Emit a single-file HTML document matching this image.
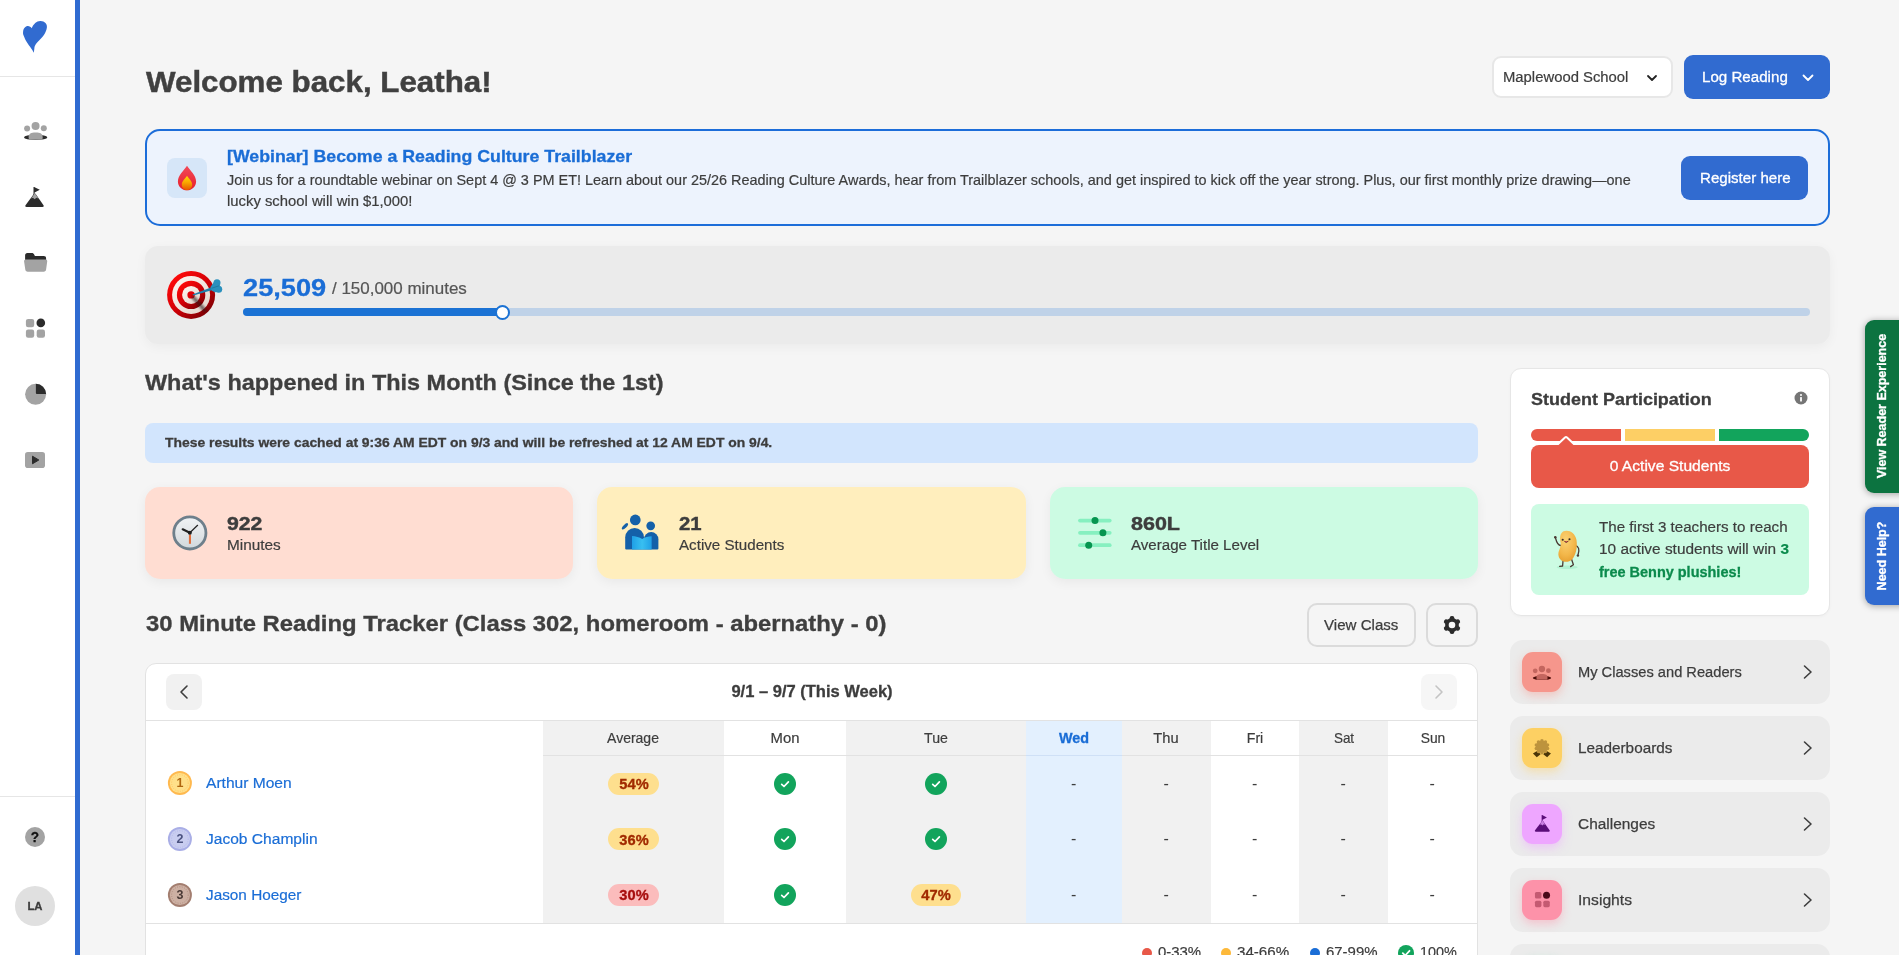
<!DOCTYPE html>
<html lang="en">
<head>
<meta charset="utf-8">
<title>Dashboard</title>
<style>
*{box-sizing:border-box;margin:0;padding:0}
html,body{width:1899px;height:955px;overflow:hidden;background:#f5f5f5;font-family:"Liberation Sans",sans-serif;color:#3d3d3d}
#root{position:absolute;left:0;top:0;width:1899px;height:955px;overflow:hidden;will-change:transform}
.abs{position:absolute}
.t{position:absolute;white-space:nowrap;line-height:1;-webkit-text-stroke:0.2px}
.t[style*="font-weight:700"]{-webkit-text-stroke:0.3px}
#side{position:absolute;left:0;top:0;width:75px;height:955px;background:#fff}
#bar{position:absolute;left:75px;top:0;width:5px;height:955px;background:#2f6bd1}
.hl{position:absolute;left:0;width:75px;height:1px;background:#e6e6e6}
h1.t{font-size:31px;font-weight:700;color:#404040;-webkit-text-stroke:0.45px}
h2.t{font-size:23px;font-weight:700;color:#3f3f3f;-webkit-text-stroke:0.32px}
.btnb{position:absolute;background:#316bd0;border-radius:8px;color:#fff}
</style>
</head>
<body>
<div id="root">
<!-- SIDEBAR -->
<div id="side"></div>
<div id="bar"></div>
<div class="hl" style="top:76px"></div>
<div class="hl" style="top:796px"></div>

<!-- HEADER -->
<h1 class="t" id="title" style="left:145.70px;top:66.71px;font-size:29.4px;letter-spacing:0px;transform-origin:0 50%;transform:scaleX(1.0650)">Welcome back, Leatha!</h1>

<!-- select + log reading -->
<div class="abs" style="left:1492px;top:56px;width:181px;height:42px;background:#fff;border:2px solid #e7e7e7;border-radius:9px"></div>
<div class="t" id="sel" style="left:1503.10px;top:69.55px;font-size:14px;color:#3d3d3d;letter-spacing:0px;transform-origin:0 50%;transform:scaleX(1.0600)">Maplewood School</div>
<svg class="abs" style="left:1645px;top:72px" width="14" height="12" viewBox="0 0 14 12"><path d="M3 4 L7 8 L11 4" fill="none" stroke="#222" stroke-width="1.8" stroke-linecap="round" stroke-linejoin="round"/></svg>
<div class="btnb" style="left:1684px;top:55px;width:146px;height:44px;border-radius:9px"></div>
<div class="t" id="logr" style="left:1702.10px;top:69.28px;font-size:15.5px;color:#fff;-webkit-text-stroke:0.3px #fff;letter-spacing:0px;transform-origin:0 50%;transform:scaleX(0.9759)">Log Reading</div>
<svg class="abs" style="left:1800px;top:71px" width="16" height="14" viewBox="0 0 16 14"><path d="M3.5 4.5 L8 9 L12.5 4.5" fill="none" stroke="#fff" stroke-width="1.8" stroke-linecap="round" stroke-linejoin="round"/></svg>

<!-- BANNER -->
<div class="abs" style="left:145px;top:129px;width:1685px;height:97px;background:#edf3fd;border:2px solid #1c6dd9;border-radius:15px"></div>
<div class="abs" style="left:167px;top:158px;width:40px;height:40px;background:#d6e6f8;border-radius:8px"></div>
<svg class="abs" style="left:177px;top:165px" width="20" height="26" viewBox="0 0 20 26">
<defs><linearGradient id="fg1" x1="0" y1="0" x2="0" y2="1"><stop offset="0" stop-color="#f24a58"/><stop offset="1" stop-color="#e81f2c"/></linearGradient>
<linearGradient id="fg2" x1="0" y1="0" x2="0" y2="1"><stop offset="0" stop-color="#ffdc00"/><stop offset="0.450" stop-color="#f9a800"/><stop offset="1" stop-color="#e65500"/></linearGradient></defs>
<path d="M10 0.800 C13 5.500 19.100 10.500 19.100 16.400 C19.100 21.500 15 25.200 10 25.200 C5 25.200 0.900 21.500 0.900 16.400 C0.900 10.500 7 5.500 10 0.800 Z" fill="url(#fg1)"/>
<path d="M10 10.800 C11.500 13.500 15.200 16 15.200 19.600 C15.200 23 12.800 25.200 10 25.200 C7.200 25.200 4.800 23 4.800 19.600 C4.800 16 8.500 13.500 10 10.800 Z" fill="url(#fg2)"/>
</svg>
<div class="t" id="bt" style="left:226.80px;top:148.41px;font-size:17px;font-weight:700;color:#1a6dd6;letter-spacing:0px;transform-origin:0 50%;transform:scaleX(1.0442)">[Webinar] Become a Reading Culture Trailblazer</div>
<div class="t" id="bl1" style="left:226.80px;top:173.03px;font-size:14.5px;color:#3d3d3d;letter-spacing:0px;transform-origin:0 50%;transform:scaleX(0.9954)">Join us for a roundtable webinar on Sept 4 @ 3 PM ET! Learn about our 25/26 Reading Culture Awards, hear from Trailblazer schools, and get inspired to kick off the year strong. Plus, our first monthly prize drawing—one</div>
<div class="t" id="bl2" style="left:226.80px;top:194.03px;font-size:14.5px;color:#3d3d3d;letter-spacing:0px;transform-origin:0 50%;transform:scaleX(1.0229)">lucky school will win $1,000!</div>
<div class="btnb" style="left:1681px;top:156px;width:127px;height:44px;border-radius:9px"></div>
<div class="t" id="reg" style="left:1699.50px;top:170.08px;font-size:15.5px;color:#fff;-webkit-text-stroke:0.3px #fff;letter-spacing:0px;transform-origin:0 50%;transform:scaleX(0.9737)">Register here</div>

<!-- GOAL -->
<div class="abs" style="left:145px;top:246px;width:1685px;height:98px;background:#ebebeb;border-radius:13px;box-shadow:0 3px 12px rgba(0,0,0,.045)"></div>
<svg class="abs" style="left:165px;top:268px" width="60" height="54" viewBox="0 0 60 54">
<defs><linearGradient id="tg" x1="0.150" y1="0.100" x2="0.850" y2="0.900"><stop offset="0" stop-color="#ff0a0a"/><stop offset="0.500" stop-color="#d40006"/><stop offset="1" stop-color="#7e0004"/></linearGradient>
<linearGradient id="tw" x1="0.150" y1="0.100" x2="0.850" y2="0.900"><stop offset="0" stop-color="#fbf3ee"/><stop offset="1" stop-color="#e6d8cf"/></linearGradient>
<filter id="bl" x="-50%" y="-50%" width="200%" height="200%"><feGaussianBlur stdDeviation="0.900"/></filter></defs>
<circle cx="26.100" cy="26.900" r="24" fill="url(#tg)"/>
<circle cx="26.100" cy="26.900" r="19" fill="url(#tw)"/>
<circle cx="26.100" cy="26.900" r="14.200" fill="url(#tg)"/>
<circle cx="26.100" cy="26.900" r="9" fill="url(#tw)"/>
<circle cx="26.100" cy="26.900" r="3.700" fill="#e00008"/>
<path d="M28.500 29.500 L39.500 42" stroke="#2a1212" stroke-opacity="0.600" stroke-width="3.800" stroke-linecap="round" filter="url(#bl)"/>
<path d="M27.500 26.600 L46.500 19.300 L47.600 22 L28.300 27.400 Z" fill="#1f80ab"/>
<circle cx="52" cy="14.800" r="3.500" fill="#2b90bd"/><circle cx="53.700" cy="21.200" r="3.500" fill="#2b90bd"/>
<path d="M45.500 19 L50 12.500 L54.500 17.500 L56 23.500 L50 24.300 L46.800 22.800 Z" fill="#2b90bd"/>
<path d="M46.500 20.300 L54.500 17.600" stroke="#1f7ba3" stroke-width="1"/>
</svg>
<div class="t" id="g1" style="left:242.70px;top:275.71px;font-size:24.8px;font-weight:700;color:#1a6dd6;letter-spacing:0px;transform-origin:0 50%;transform:scaleX(1.0970)">25,509</div>
<div class="t" id="g2" style="left:332.20px;top:280.71px;font-size:15.7px;color:#555;letter-spacing:0px;transform-origin:0 50%;transform:scaleX(1.0808)">/ 150,000 minutes</div>
<div class="abs" style="left:243px;top:308px;width:1567px;height:8px;border-radius:4px;background:#bfd2e8"></div>
<div class="abs" style="left:243px;top:308px;width:262px;height:8px;border-radius:4px;background:#1b72d4"></div>
<div class="abs" style="left:494.600px;top:304.500px;width:15px;height:15px;border-radius:50%;background:#fff;border:2.900px solid #1b72d4"></div>

<!-- WHAT'S HAPPENED -->
<h2 class="t" id="h2a" style="left:145.30px;top:372.28px;font-size:22px;letter-spacing:0px;transform-origin:0 50%;transform:scaleX(1.0653)">What's happened in This Month (Since the 1st)</h2>
<div class="abs" style="left:145px;top:423px;width:1333px;height:40px;background:#d2e5fd;border-radius:8px"></div>
<div class="t" id="cache" style="left:164.70px;top:436.78px;font-size:12.9px;font-weight:700;color:#3d3d3d;letter-spacing:0px;transform-origin:0 50%;transform:scaleX(1.0775)">These results were cached at 9:36 AM EDT on 9/3 and will be refreshed at 12 AM EDT on 9/4.</div>

<!-- STAT CARDS -->
<div class="abs card" style="left:145px;top:487px;width:428px;height:92px;background:#ffddd2;border-radius:15px;box-shadow:0 3px 12px rgba(0,0,0,.055)"></div>
<div class="abs card" style="left:597px;top:487px;width:429px;height:92px;background:#ffeebd;border-radius:15px;box-shadow:0 3px 12px rgba(0,0,0,.055)"></div>
<div class="abs card" style="left:1050px;top:487px;width:428px;height:92px;background:#ccfbe3;border-radius:15px;box-shadow:0 3px 12px rgba(0,0,0,.055)"></div>
<!-- clock -->
<svg class="abs" style="left:170px;top:513px" width="40" height="40" viewBox="0 0 40 40">
<defs><linearGradient id="ck" x1="0" y1="0" x2="0" y2="1"><stop offset="0" stop-color="#f1f3f5"/><stop offset="1" stop-color="#d2d8dc"/></linearGradient></defs>
<circle cx="19.850" cy="19.900" r="16.100" fill="url(#ck)" stroke="#6e7f8b" stroke-width="2.800"/>
<path d="M19.850 19.700 L12.700 16.300" stroke="#222" stroke-width="2.200" stroke-linecap="round"/>
<path d="M19.850 19.700 L27.600 12.300" stroke="#222" stroke-width="1.200" stroke-linecap="round"/>
<path d="M19.950 21.500 L19.950 30.800" stroke="#e2703f" stroke-width="2.100"/>
<circle cx="19.850" cy="19.700" r="2" fill="#1d1d1d"/>
</svg>
<div class="t" id="s1a" style="left:227.00px;top:514.32px;font-size:19px;font-weight:700;letter-spacing:0px;-webkit-text-stroke:0.45px;transform-origin:0 50%;transform:scaleX(1.1166)">922</div>
<div class="t" id="s1b" style="left:227.00px;top:537.08px;font-size:15.5px;letter-spacing:0px;transform-origin:0 50%;transform:scaleX(0.9911)">Minutes</div>
<!-- people -->
<svg class="abs" style="left:620px;top:513px" width="42" height="38" viewBox="0 0 42 38">
<defs><linearGradient id="bk" x1="0" y1="0" x2="1" y2="0"><stop offset="0" stop-color="#1f9fe6"/><stop offset="0.520" stop-color="#38bff1"/><stop offset="1" stop-color="#1f9fe6"/></linearGradient></defs>
<g fill="#1460a9">
<circle cx="15.300" cy="6.950" r="5.350"/><circle cx="30.700" cy="12.800" r="4.350"/>
<ellipse cx="4.950" cy="13.300" rx="4.100" ry="1.600" transform="rotate(-45 4.950 13.300)"/>
<path d="M5.200 35.600 V24.300 A9.400 9.400 0 0 1 24 24.300 V36.600 H6.200 A1 1 0 0 1 5.200 35.600 Z"/>
<path d="M24 36.600 V26.300 A7.200 7.200 0 0 1 38.400 26.300 V35.600 A1 1 0 0 1 37.400 36.600 Z"/>
</g>
<path d="M12 23 C15.500 23.300 19.500 24.300 22.200 25.900 C24.800 24.400 28.500 23.500 31.650 23.300 L31.650 36.600 L12 36.600 Z" fill="url(#bk)"/>
</svg>
<div class="t" id="s2a" style="left:678.90px;top:514.32px;font-size:19px;font-weight:700;letter-spacing:0px;-webkit-text-stroke:0.45px;transform-origin:0 50%;transform:scaleX(1.0690)">21</div>
<div class="t" id="s2b" style="left:678.90px;top:537.08px;font-size:15.5px;letter-spacing:0px;transform-origin:0 50%;transform:scaleX(0.9777)">Active Students</div>
<!-- sliders -->
<svg class="abs" style="left:1076px;top:513px" width="38" height="38" viewBox="0 0 38 38">
<g stroke="#86f0c0" stroke-width="3.700" stroke-linecap="round"><path d="M3.950 7.570 H33.750"/><path d="M3.950 19.870 H33.750"/><path d="M3.950 32.170 H33.750"/></g>
<circle cx="19" cy="7.570" r="3.500" fill="#069550"/><circle cx="26.900" cy="19.870" r="3.500" fill="#069550"/><circle cx="12.700" cy="32.170" r="3.500" fill="#069550"/>
</svg>
<div class="t" id="s3a" style="left:1131.20px;top:514.32px;font-size:19px;font-weight:700;letter-spacing:0px;-webkit-text-stroke:0.45px;transform-origin:0 50%;transform:scaleX(1.1313)">860L</div>
<div class="t" id="s3b" style="left:1131.20px;top:537.08px;font-size:15.5px;letter-spacing:0px;transform-origin:0 50%;transform:scaleX(0.9746)">Average Title Level</div>

<!-- TRACKER HEADING -->
<h2 class="t" id="h2b" style="left:145.50px;top:613.28px;font-size:22px;letter-spacing:0px;transform-origin:0 50%;transform:scaleX(1.0835)">30 Minute Reading Tracker (Class 302, homeroom - abernathy - 0)</h2>
<div class="abs" style="left:1307px;top:603px;width:109px;height:44px;border:2px solid #dbdbdb;border-radius:10px;background:#f5f5f5"></div>
<div class="t" id="vc" style="left:1324.00px;top:617.18px;font-size:15.5px;color:#3d3d3d;-webkit-text-stroke:0.25px #3d3d3d;letter-spacing:0px;transform-origin:0 50%;transform:scaleX(0.9739)">View Class</div>
<div class="abs" style="left:1426px;top:603px;width:52px;height:44px;border:2px solid #dbdbdb;border-radius:10px;background:#f5f5f5"></div>
<svg class="abs" style="left:1442px;top:615px" width="20" height="20" viewBox="0 0 20 20">
<g fill="#2b2b2b"><circle cx="10" cy="10" r="6.900"/>
<g id="teeth"><rect x="7.700" y="1.100" width="4.600" height="17.800" rx="2"/><rect x="7.700" y="1.100" width="4.600" height="17.800" rx="2" transform="rotate(60 10 10)"/><rect x="7.700" y="1.100" width="4.600" height="17.800" rx="2" transform="rotate(120 10 10)"/></g></g>
<circle cx="10" cy="10" r="3.300" fill="#f5f5f5"/>
</svg>

<!-- TABLE CARD -->
<div class="abs" style="left:145px;top:663px;width:1333px;height:320px;background:#fff;border:1px solid #e2e2e2;border-radius:11px"></div>
<div class="abs" style="left:543px;top:721px;width:181px;height:202px;background:#f1f1f1"></div>
<div class="abs" style="left:846px;top:721px;width:180px;height:202px;background:#f1f1f1"></div>
<div class="abs" style="left:1026px;top:721px;width:96px;height:202px;background:#e3f0fe"></div>
<div class="abs" style="left:1122px;top:721px;width:89px;height:202px;background:#f1f1f1"></div>
<div class="abs" style="left:1299px;top:721px;width:89px;height:202px;background:#f1f1f1"></div>
<div class="abs" style="left:146px;top:720px;width:1331px;height:1px;background:#e2e2e2"></div>
<div class="abs" style="left:543px;top:755px;width:934px;height:1px;background:#e2e2e2"></div>
<div class="abs" style="left:1026px;top:755px;width:96px;height:1px;background:#cfe0f6"></div>
<div class="abs" style="left:146px;top:923px;width:1331px;height:1px;background:#e2e2e2"></div>
<div class="abs" style="left:166px;top:674px;width:36px;height:36px;background:#f1f1f1;border-radius:8px"></div>
<svg class="abs" style="left:176px;top:683px" width="16" height="18" viewBox="0 0 16 18"><path d="M11 3 L5 9 L11 15" fill="none" stroke="#3d3d3d" stroke-width="1.6" stroke-linecap="round" stroke-linejoin="round"/></svg>
<div class="abs" style="left:1421px;top:674px;width:36px;height:36px;background:#f6f6f6;border-radius:8px"></div>
<svg class="abs" style="left:1431px;top:683px" width="16" height="18" viewBox="0 0 16 18"><path d="M5 3 L11 9 L5 15" fill="none" stroke="#c4c4c4" stroke-width="1.6" stroke-linecap="round" stroke-linejoin="round"/></svg>
<div class="t ctr" id="wk" style="left:811.80px;top:683.56px;font-size:16px;font-weight:700;transform:translateX(-50%) scaleX(1.0319);letter-spacing:0px">9/1 – 9/7 (This Week)</div>
<div class="t ctr ch" id="cAverage" style="left:633.35px;top:731.03px;font-size:14.5px;transform:translateX(-50%) scaleX(0.9656);letter-spacing:0px">Average</div>
<div class="t ctr ch" id="cMon" style="left:784.95px;top:731.03px;font-size:14.5px;transform:translateX(-50%) scaleX(1.0241);letter-spacing:0px">Mon</div>
<div class="t ctr ch" id="cTue" style="left:936.00px;top:731.03px;font-size:14.5px;transform:translateX(-50%) scaleX(0.9733);letter-spacing:0px">Tue</div>
<div class="t ctr ch" id="cWed" style="left:1074.05px;top:731.03px;font-size:14.5px;font-weight:700;color:#1a6dd6;transform:translateX(-50%) scaleX(0.9915);letter-spacing:0px">Wed</div>
<div class="t ctr ch" id="cThu" style="left:1166.05px;top:731.03px;font-size:14.5px;transform:translateX(-50%) scaleX(1.0120);letter-spacing:0px">Thu</div>
<div class="t ctr ch" id="cFri" style="left:1254.85px;top:731.03px;font-size:14.5px;transform:translateX(-50%) scaleX(0.9751);letter-spacing:0px">Fri</div>
<div class="t ctr ch" id="cSat" style="left:1343.70px;top:731.03px;font-size:14.5px;transform:translateX(-50%) scaleX(0.9281);letter-spacing:0px">Sat</div>
<div class="t ctr ch" id="cSun" style="left:1432.50px;top:731.03px;font-size:14.5px;transform:translateX(-50%) scaleX(0.9530);letter-spacing:0px">Sun</div>
<svg class="abs" style="left:167px;top:770px" width="26" height="26" viewBox="0 0 26 26"><circle cx="12.900" cy="13" r="12" fill="#ffb94f"/><circle cx="12.900" cy="13" r="10.100" fill="#ffe08a"/><circle cx="12.900" cy="13" r="8.300" fill="none" stroke="#ffb94f" stroke-width="0.900" stroke-dasharray="0.900 1.500" opacity="0.800"/><text x="12.900" y="17.200" text-anchor="middle" font-family="Liberation Sans, sans-serif" font-weight="700" font-size="12.500" fill="#b0660f">1</text></svg>
<div class="t nm" id="n1" style="left:205.80px;top:775.08px;font-size:15.5px;color:#1a6dd6;letter-spacing:0px;transform-origin:0 50%;transform:scaleX(1.0047)">Arthur Moen</div>
<div class="abs" style="left:608.0px;top:773px;width:50.500px;height:22px;border-radius:11px;background:#fedf8e"></div>
<div class="t pl" id="pl1" style="left:633.65px;top:777.05px;font-size:14px;font-weight:700;color:#a12a00;transform:translateX(-50%) scaleX(1.0453);letter-spacing:0px">54%</div>
<svg class="abs" style="left:773.5px;top:773px" width="22" height="22" viewBox="0 0 22 22"><circle cx="11" cy="11" r="11" fill="#12a45c"/><path d="M7.700 11.300 L10 13.500 L14.400 8.800" fill="none" stroke="#fff" stroke-width="1.700" stroke-linecap="round" stroke-linejoin="round"/></svg>
<svg class="abs" style="left:924.5px;top:773px" width="22" height="22" viewBox="0 0 22 22"><circle cx="11" cy="11" r="11" fill="#12a45c"/><path d="M7.700 11.300 L10 13.500 L14.400 8.800" fill="none" stroke="#fff" stroke-width="1.700" stroke-linecap="round" stroke-linejoin="round"/></svg>
<div class="t" style="left:1073.7px;top:775.7px;font-size:16px;color:#3d3d3d;-webkit-text-stroke:0;transform:translateX(-50%)">-</div>
<div class="t" style="left:1166.2px;top:775.7px;font-size:16px;color:#3d3d3d;-webkit-text-stroke:0;transform:translateX(-50%)">-</div>
<div class="t" style="left:1254.7px;top:775.7px;font-size:16px;color:#3d3d3d;-webkit-text-stroke:0;transform:translateX(-50%)">-</div>
<div class="t" style="left:1343.2px;top:775.7px;font-size:16px;color:#3d3d3d;-webkit-text-stroke:0;transform:translateX(-50%)">-</div>
<div class="t" style="left:1432.2px;top:775.7px;font-size:16px;color:#3d3d3d;-webkit-text-stroke:0;transform:translateX(-50%)">-</div>
<svg class="abs" style="left:167px;top:826px" width="26" height="26" viewBox="0 0 26 26"><circle cx="12.900" cy="13" r="12" fill="#a9aee6"/><circle cx="12.900" cy="13" r="10.100" fill="#c9cdf0"/><circle cx="12.900" cy="13" r="8.300" fill="none" stroke="#a9aee6" stroke-width="0.900" stroke-dasharray="0.900 1.500" opacity="0.800"/><text x="12.900" y="17.200" text-anchor="middle" font-family="Liberation Sans, sans-serif" font-weight="700" font-size="12.500" fill="#4b5280">2</text></svg>
<div class="t nm" id="n2" style="left:205.80px;top:830.88px;font-size:15.5px;color:#1a6dd6;letter-spacing:0px;transform-origin:0 50%;transform:scaleX(1.0040)">Jacob Champlin</div>
<div class="abs" style="left:608.0px;top:828px;width:50.500px;height:22px;border-radius:11px;background:#fedf8e"></div>
<div class="t pl" id="pl2" style="left:633.65px;top:832.65px;font-size:14px;font-weight:700;color:#a12a00;transform:translateX(-50%) scaleX(1.0453);letter-spacing:0px">36%</div>
<svg class="abs" style="left:773.5px;top:828px" width="22" height="22" viewBox="0 0 22 22"><circle cx="11" cy="11" r="11" fill="#12a45c"/><path d="M7.700 11.300 L10 13.500 L14.400 8.800" fill="none" stroke="#fff" stroke-width="1.700" stroke-linecap="round" stroke-linejoin="round"/></svg>
<svg class="abs" style="left:924.5px;top:828px" width="22" height="22" viewBox="0 0 22 22"><circle cx="11" cy="11" r="11" fill="#12a45c"/><path d="M7.700 11.300 L10 13.500 L14.400 8.800" fill="none" stroke="#fff" stroke-width="1.700" stroke-linecap="round" stroke-linejoin="round"/></svg>
<div class="t" style="left:1073.7px;top:830.7px;font-size:16px;color:#3d3d3d;-webkit-text-stroke:0;transform:translateX(-50%)">-</div>
<div class="t" style="left:1166.2px;top:830.7px;font-size:16px;color:#3d3d3d;-webkit-text-stroke:0;transform:translateX(-50%)">-</div>
<div class="t" style="left:1254.7px;top:830.7px;font-size:16px;color:#3d3d3d;-webkit-text-stroke:0;transform:translateX(-50%)">-</div>
<div class="t" style="left:1343.2px;top:830.7px;font-size:16px;color:#3d3d3d;-webkit-text-stroke:0;transform:translateX(-50%)">-</div>
<div class="t" style="left:1432.2px;top:830.7px;font-size:16px;color:#3d3d3d;-webkit-text-stroke:0;transform:translateX(-50%)">-</div>
<svg class="abs" style="left:167px;top:882px" width="26" height="26" viewBox="0 0 26 26"><circle cx="12.900" cy="13" r="12" fill="#a37e70"/><circle cx="12.900" cy="13" r="10.100" fill="#cdb0a3"/><circle cx="12.900" cy="13" r="8.300" fill="none" stroke="#a37e70" stroke-width="0.900" stroke-dasharray="0.900 1.500" opacity="0.800"/><text x="12.900" y="17.200" text-anchor="middle" font-family="Liberation Sans, sans-serif" font-weight="700" font-size="12.500" fill="#4a3a36">3</text></svg>
<div class="t nm" id="n3" style="left:205.80px;top:886.68px;font-size:15.5px;color:#1a6dd6;letter-spacing:0px;transform-origin:0 50%;transform:scaleX(0.9884)">Jason Hoeger</div>
<div class="abs" style="left:608.0px;top:884px;width:50.500px;height:22px;border-radius:11px;background:#fbbcbc"></div>
<div class="t pl" id="pl3" style="left:633.65px;top:888.35px;font-size:14px;font-weight:700;color:#a80f0f;transform:translateX(-50%) scaleX(1.0453);letter-spacing:0px">30%</div>
<svg class="abs" style="left:773.5px;top:884px" width="22" height="22" viewBox="0 0 22 22"><circle cx="11" cy="11" r="11" fill="#12a45c"/><path d="M7.700 11.300 L10 13.500 L14.400 8.800" fill="none" stroke="#fff" stroke-width="1.700" stroke-linecap="round" stroke-linejoin="round"/></svg>
<div class="abs" style="left:910.5px;top:884px;width:50.500px;height:22px;border-radius:11px;background:#fedf8e"></div>
<div class="t pl" id="pl4" style="left:935.80px;top:888.35px;font-size:14px;font-weight:700;color:#a12a00;transform:translateX(-50%) scaleX(1.0488);letter-spacing:0px">47%</div>
<div class="t" style="left:1073.7px;top:886.7px;font-size:16px;color:#3d3d3d;-webkit-text-stroke:0;transform:translateX(-50%)">-</div>
<div class="t" style="left:1166.2px;top:886.7px;font-size:16px;color:#3d3d3d;-webkit-text-stroke:0;transform:translateX(-50%)">-</div>
<div class="t" style="left:1254.7px;top:886.7px;font-size:16px;color:#3d3d3d;-webkit-text-stroke:0;transform:translateX(-50%)">-</div>
<div class="t" style="left:1343.2px;top:886.7px;font-size:16px;color:#3d3d3d;-webkit-text-stroke:0;transform:translateX(-50%)">-</div>
<div class="t" style="left:1432.2px;top:886.7px;font-size:16px;color:#3d3d3d;-webkit-text-stroke:0;transform:translateX(-50%)">-</div>
<div class="abs" style="left:1142px;top:948px;width:10px;height:10px;border-radius:50%;background:#e85848"></div>
<div class="t lg" id="l1" style="left:1158.00px;top:944.93px;font-size:14.5px;letter-spacing:0px;transform-origin:0 50%;transform:scaleX(1.0281)">0-33%</div>
<div class="abs" style="left:1221px;top:948px;width:10px;height:10px;border-radius:50%;background:#fdb93a"></div>
<div class="t lg" id="l2" style="left:1237.40px;top:944.93px;font-size:14.5px;letter-spacing:0px;transform-origin:0 50%;transform:scaleX(1.0423)">34-66%</div>
<div class="abs" style="left:1310px;top:948px;width:10px;height:10px;border-radius:50%;background:#1a6dd6"></div>
<div class="t lg" id="l3" style="left:1325.80px;top:944.93px;font-size:14.5px;letter-spacing:0px;transform-origin:0 50%;transform:scaleX(1.0303)">67-99%</div>
<svg class="abs" style="left:1398px;top:945px" width="16" height="16" viewBox="0 0 16 16"><circle cx="8" cy="8" r="8" fill="#12a45c"/><path d="M4.800 8.200 L7.200 10.500 L11.500 5.800" fill="none" stroke="#fff" stroke-width="1.800" stroke-linecap="round" stroke-linejoin="round"/></svg>
<div class="t lg" id="l4" style="left:1419.50px;top:944.93px;font-size:14.5px;letter-spacing:0px;transform-origin:0 50%;transform:scaleX(0.9921)">100%</div>
<!-- STUDENT PARTICIPATION -->
<div class="abs" style="left:1510px;top:368px;width:320px;height:248px;background:#fff;border:1px solid #e6e6e6;border-radius:11px;box-shadow:0 1px 3px rgba(0,0,0,.03)"></div>
<div class="t" id="sp" style="left:1531.10px;top:391.86px;font-size:16.7px;font-weight:700;letter-spacing:0px;transform-origin:0 50%;transform:scaleX(1.0774)">Student Participation</div>
<svg class="abs" style="left:1794px;top:391px" width="14" height="14" viewBox="0 0 14 14"><circle cx="7" cy="7" r="6.500" fill="#757575"/><circle cx="7" cy="4" r="1" fill="#fff"/><rect x="6.100" y="6" width="1.800" height="4.600" rx="0.500" fill="#fff"/></svg>
<div class="abs" style="left:1531px;top:429px;width:90px;height:12px;background:#e85848;border-radius:6px 0 0 6px"></div>
<div class="abs" style="left:1625px;top:429px;width:90px;height:12px;background:#fdcf65"></div>
<div class="abs" style="left:1719px;top:429px;width:90px;height:12px;background:#12a45c;border-radius:0 6px 6px 0"></div>
<div class="abs" style="left:1531px;top:445px;width:278px;height:43px;background:#e85848;border-radius:8px"></div>
<svg class="abs" style="left:1555px;top:434px" width="22" height="13" viewBox="0 0 22 13"><path d="M1 12 L10 3.500 Q11 2.600 12 3.500 L21 12" fill="#e85848" stroke="#fff" stroke-width="2" stroke-linejoin="round"/><rect x="0" y="11" width="22" height="2" fill="#e85848"/></svg>
<div class="t" id="as" style="left:1670.10px;top:457.80px;font-size:15px;color:#fff;-webkit-text-stroke:0.3px #fff;transform:translateX(-50%) scaleX(1.0405);letter-spacing:0px">0 Active Students</div>
<div class="abs" style="left:1531px;top:504px;width:278px;height:91px;background:#ccfbe3;border-radius:8px"></div>
<!-- benny -->
<svg class="abs" style="left:1550px;top:528px" width="34" height="42" viewBox="0 0 34 42">
<defs><radialGradient id="bn" cx="0.400" cy="0.300" r="0.800"><stop offset="0" stop-color="#fbd274"/><stop offset="0.600" stop-color="#f3b74a"/><stop offset="1" stop-color="#e39a2b"/></radialGradient></defs>
<ellipse cx="17.200" cy="39.200" rx="10.500" ry="1.800" fill="#b2f2d2"/>
<g stroke="#4a3a33" stroke-width="1.300" fill="none" stroke-linecap="round" stroke-linejoin="round">
<path d="M13 33 L12.600 38 L9.600 38.300"/><path d="M21.500 31 L23.400 36.800 L20.600 38.600"/>
<path d="M10.800 17.500 C8 17.500 6.500 14 5.500 10"/><path d="M25.200 17.300 C28.500 18 30 21.500 28 27"/>
</g>
<circle cx="5.300" cy="9.300" r="1.300" fill="#4a3a33"/><circle cx="27.900" cy="27.600" r="1.200" fill="#4a3a33"/>
<path d="M13 3.500 C17.500 1.200 25 3.500 26.500 12 C27.600 19 26 27 22 31.500 C18 35.500 10 34.500 8.600 28 C7.600 23 11 20 10.800 16 C10.500 13 8.500 7 13 3.500 Z" fill="url(#bn)"/>
<circle cx="12.700" cy="11.700" r="1.050" fill="#3a2a22"/><circle cx="19.500" cy="11.300" r="1.050" fill="#3a2a22"/>
<path d="M14.300 13.300 Q16.300 15.800 18.500 13" fill="#d8454a" stroke="#3a2a22" stroke-width="0.700"/>
</svg>
<div class="t" id="p1" style="left:1598.80px;top:518.98px;font-size:15.5px;letter-spacing:0px;transform-origin:0 50%;transform:scaleX(0.9773)">The first 3 teachers to reach</div>
<div class="t" id="p2" style="left:1598.80px;top:541.08px;font-size:15.5px;letter-spacing:0px;transform-origin:0 50%;transform:scaleX(0.9934)">10 active students will win <b style="color:#0b8a4c">3</b></div>
<div class="t" id="p3" style="left:1598.80px;top:563.90px;font-size:15px;font-weight:700;color:#0b8a4c;letter-spacing:0px;transform-origin:0 50%;transform:scaleX(0.9644)">free Benny plushies!</div>

<!-- NAV CARDS -->
<div class="abs nav" style="left:1510px;top:640px;width:320px;height:64px;background:#ebebeb;border-radius:13px"></div>
<div class="abs nav" style="left:1510px;top:716px;width:320px;height:64px;background:#ebebeb;border-radius:13px"></div>
<div class="abs nav" style="left:1510px;top:792px;width:320px;height:64px;background:#ebebeb;border-radius:13px"></div>
<div class="abs nav" style="left:1510px;top:868px;width:320px;height:64px;background:#ebebeb;border-radius:13px"></div>
<div class="abs nav" style="left:1510px;top:944px;width:320px;height:64px;background:#ebebeb;border-radius:13px"></div>
<div class="abs" style="left:1522px;top:652px;width:40px;height:40px;border-radius:11px;background:#f6968c;box-shadow:0 4px 10px rgba(246,150,140,.45)"></div>
<div class="abs" style="left:1522px;top:728px;width:40px;height:40px;border-radius:11px;background:#fdd063;box-shadow:0 4px 10px rgba(253,208,99,.45)"></div>
<div class="abs" style="left:1522px;top:804px;width:40px;height:40px;border-radius:11px;background:#eea6ff;box-shadow:0 4px 10px rgba(238,166,255,.5)"></div>
<div class="abs" style="left:1522px;top:880px;width:40px;height:40px;border-radius:11px;background:#fd92a9;box-shadow:0 4px 10px rgba(253,146,169,.45)"></div>
<div class="abs" style="left:1522px;top:956px;width:40px;height:40px;border-radius:11px;background:#8fe6c0;box-shadow:0 4px 10px rgba(120,230,180,.45)"></div>
<!-- nav icons -->
<svg class="abs" style="left:1531.900px;top:664.500px" width="20.540" height="15.800" viewBox="0 0 26 20">
<ellipse cx="12.650" cy="16.400" rx="11.650" ry="2.700" fill="#4d0f0b"/>
<path d="M5.600 16.500 C5.600 12.600 8 11.500 12.650 11.500 C17.300 11.500 19.700 12.600 19.700 16.500 C19.700 18 19 18.800 17.700 18.800 L7.600 18.800 C6.300 18.800 5.600 18 5.600 16.500 Z" fill="#c4665f"/>
<circle cx="12.550" cy="5.100" r="4" fill="#c4665f"/><circle cx="4.100" cy="7.400" r="3" fill="#c4665f"/><circle cx="20.800" cy="7.200" r="3" fill="#c4665f"/>
</svg>
<svg class="abs" style="left:1532px;top:738.600px" width="20" height="20" viewBox="0 0 20 20">
<path d="M5.450 11.850 L0.960 14.570 L4.770 18.240 L8.580 15.250 Z" fill="#4a3508"/><path d="M14.430 11.850 L18.920 14.570 L15.110 18.240 L11.300 15.250 Z" fill="#4a3508"/>
<g fill="#bd933d"><circle cx="9.940" cy="7.760" r="6.100"/><circle cx="9.94" cy="1.86" r="1.750"/><circle cx="13.41" cy="2.99" r="1.750"/><circle cx="15.55" cy="5.94" r="1.750"/><circle cx="15.55" cy="9.58" r="1.750"/><circle cx="13.41" cy="12.53" r="1.750"/><circle cx="9.94" cy="13.66" r="1.750"/><circle cx="6.47" cy="12.53" r="1.750"/><circle cx="4.33" cy="9.58" r="1.750"/><circle cx="4.33" cy="5.94" r="1.750"/><circle cx="6.47" cy="2.99" r="1.750"/></g>
</svg>
<svg class="abs" style="left:1532.600px;top:814.400px" width="18.600" height="18.600" viewBox="0 0 20 20">
<path d="M9.300 1 L9.300 9 L10.300 9 L10.300 6.200 L15 3.800 L10.300 1.300 L10.300 1 Z" fill="#5a0d78"/>
<path d="M9.800 7.500 L2.200 17.600 C1.700 18.400 2.100 19 3 19 L17 19 C17.900 19 18.300 18.400 17.800 17.600 L10.800 7.500 Z" fill="#5a0d78"/>
<path d="M9.900 7.500 L7 11.800 L8.600 11 L10 12.300 L11.600 11 L13.300 11.800 L10.700 7.500 Z" fill="#c97ee0"/>
</svg>
<svg class="abs" style="left:1533.500px;top:891.200px" width="17.100" height="17.100" viewBox="0 0 18 18">
<rect x="1" y="1" width="6.800" height="6.800" rx="1.600" fill="#c45a72"/><circle cx="13.200" cy="4.400" r="3.700" fill="#4a0a1a"/>
<rect x="1" y="10.200" width="6.800" height="6.800" rx="1.600" fill="#c45a72"/><rect x="9.800" y="10.200" width="6.800" height="6.800" rx="1.600" fill="#c45a72"/>
</svg>
<div class="t nl" id="nv1" style="left:1577.70px;top:664.08px;font-size:15.5px;-webkit-text-stroke:0.25px #3d3d3d;letter-spacing:0px;transform-origin:0 50%;transform:scaleX(0.9459)">My Classes and Readers</div>
<div class="t nl" id="nv2" style="left:1577.70px;top:740.08px;font-size:15.5px;-webkit-text-stroke:0.25px #3d3d3d;letter-spacing:0px;transform-origin:0 50%;transform:scaleX(0.9867)">Leaderboards</div>
<div class="t nl" id="nv3" style="left:1577.70px;top:816.08px;font-size:15.5px;-webkit-text-stroke:0.25px #3d3d3d;letter-spacing:0px;transform-origin:0 50%;transform:scaleX(0.9953)">Challenges</div>
<div class="t nl" id="nv4" style="left:1577.70px;top:892.08px;font-size:15.5px;-webkit-text-stroke:0.25px #3d3d3d;letter-spacing:0px;transform-origin:0 50%;transform:scaleX(1.0108)">Insights</div>
<svg class="abs" style="left:1800px;top:663px" width="16" height="18" viewBox="0 0 16 18"><path d="M4.500 3 L11 9 L4.500 15" fill="none" stroke="#3d3d3d" stroke-width="1.600" stroke-linecap="round" stroke-linejoin="round"/></svg>
<svg class="abs" style="left:1800px;top:739px" width="16" height="18" viewBox="0 0 16 18"><path d="M4.500 3 L11 9 L4.500 15" fill="none" stroke="#3d3d3d" stroke-width="1.600" stroke-linecap="round" stroke-linejoin="round"/></svg>
<svg class="abs" style="left:1800px;top:815px" width="16" height="18" viewBox="0 0 16 18"><path d="M4.500 3 L11 9 L4.500 15" fill="none" stroke="#3d3d3d" stroke-width="1.600" stroke-linecap="round" stroke-linejoin="round"/></svg>
<svg class="abs" style="left:1800px;top:891px" width="16" height="18" viewBox="0 0 16 18"><path d="M4.500 3 L11 9 L4.500 15" fill="none" stroke="#3d3d3d" stroke-width="1.600" stroke-linecap="round" stroke-linejoin="round"/></svg>

<!-- SIDE TABS -->
<div class="abs" style="left:1865px;top:320px;width:45px;height:173px;background:#0c7340;border-radius:9px;box-shadow:0 1px 7px rgba(0,0,0,.35)"></div>
<div class="abs" style="left:1865px;top:507px;width:45px;height:98px;background:#316bd0;border-radius:9px;box-shadow:0 1px 7px rgba(0,0,0,.35)"></div>
<div class="t" id="vre" style="left:1882px;top:406px;font-size:12.500px;font-weight:700;color:#fff;transform:translate(-50%,-50%) rotate(-90deg)">View Reader Experience</div>
<div class="t" id="nh" style="left:1882px;top:556px;font-size:12.500px;font-weight:700;color:#fff;transform:translate(-50%,-50%) rotate(-90deg)">Need Help?</div>
<!-- SIDEBAR ICONS -->
<svg class="abs" style="left:22px;top:20px" width="28" height="34" viewBox="0 0 28 34">
<path d="M11.750 32.700 C10 29 8.500 27.500 6.850 25.200 C4.500 22 3 19.500 2.450 17.600 C1.300 15 0.800 13.500 1.070 12 C1.200 8.500 3.500 6 5.900 6 C7.500 6 8.800 7 9.700 8.200 C11.500 4 14.500 1.200 18.200 1 C22.500 0.800 25.500 4 24.900 7.600 C24.500 10.500 23.500 12.500 21.900 15.100 C20 18 17.500 20 15.600 22 C14 23.800 13 25.200 12.500 27.100 C12.200 29 12.200 31 11.750 32.700 Z" fill="#316bd0"/>
</svg>
<svg class="abs" style="left:23px;top:121px" width="26" height="20" viewBox="0 0 26 20">
<ellipse cx="12.650" cy="16.400" rx="11.650" ry="2.700" fill="#2b2b2b"/>
<path d="M5.600 16.500 C5.600 12.600 8 11.500 12.650 11.500 C17.300 11.500 19.700 12.600 19.700 16.500 C19.700 18 19 18.800 17.700 18.800 L7.600 18.800 C6.300 18.800 5.600 18 5.600 16.500 Z" fill="#a3a3a3"/>
<circle cx="12.550" cy="5.100" r="4" fill="#a3a3a3"/><circle cx="4.100" cy="7.400" r="3" fill="#a3a3a3"/><circle cx="20.800" cy="7.200" r="3" fill="#a3a3a3"/>
</svg>
<svg class="abs" style="left:24px;top:186px" width="22" height="22" viewBox="0 0 22 22">
<path d="M9.500 1 L9.500 9 L10.600 9 L10.600 6.400 L15.800 3.700 L10.600 1.200 L10.600 1 Z" fill="#2b2b2b"/>
<path d="M10 7.800 L1.500 19.300 C0.900 20.300 1.400 21 2.500 21 L18.500 21 C19.600 21 20.100 20.300 19.500 19.300 L11.500 7.800 Z" fill="#2b2b2b"/>
<path d="M10.400 7.800 L7.200 12.600 L9 11.700 L10.600 13.200 L12.400 11.700 L14.300 12.600 L11.300 7.800 Z" fill="#a3a3a3"/>
</svg>
<svg class="abs" style="left:24px;top:252px" width="24" height="21" viewBox="0 0 24 21">
<path d="M1.100 3.400 C1.100 1.800 1.900 0.900 3.400 0.900 L7.800 0.900 C8.800 0.900 9.400 1.300 9.900 2.100 L10.900 4.100 L19.700 4.100 C21.300 4.100 22.100 4.900 22.100 6.400 L22.100 10 L1.100 10 Z" fill="#2b2b2b"/>
<path d="M0.100 9.400 C-0.100 8.200 0.700 7.400 1.900 7.400 L21.400 7.400 C22.600 7.400 23.400 8.200 23.200 9.400 L22.100 17.500 C21.900 18.900 21.100 19.700 19.700 19.700 L3.700 19.700 C2.300 19.700 1.500 18.900 1.300 17.500 Z" fill="#a3a3a3"/>
</svg>
<svg class="abs" style="left:25px;top:318px" width="22" height="22" viewBox="0 0 22 22">
<rect x="0.900" y="0.900" width="8.300" height="8.300" rx="2.200" fill="#a3a3a3"/><circle cx="15.800" cy="4.900" r="4.300" fill="#2b2b2b"/>
<rect x="0.900" y="11.500" width="8.300" height="8.300" rx="2.200" fill="#a3a3a3"/><rect x="11.700" y="11.500" width="8.300" height="8.300" rx="2.200" fill="#a3a3a3"/>
</svg>
<svg class="abs" style="left:24px;top:383px" width="24" height="24" viewBox="0 0 24 24">
<circle cx="11.600" cy="11.300" r="10.500" fill="#a3a3a3"/>
<path d="M11.900 0.800 A10.500 10.500 0 0 1 22.100 11 L12.900 11 Q11.900 11 11.900 10 Z" fill="#2b2b2b"/>
</svg>
<svg class="abs" style="left:24px;top:451px" width="22" height="18" viewBox="0 0 22 18">
<rect x="1" y="1" width="20" height="16" rx="2.800" fill="#a3a3a3"/><path d="M8.500 5.200 L14.800 9 L8.500 12.800 Z" fill="#2b2b2b" stroke="#2b2b2b" stroke-width="1" stroke-linejoin="round"/>
</svg>
<div class="abs" style="left:25px;top:827px;width:20px;height:20px;border-radius:50%;background:#a3a3a3"></div>
<div class="t" id="qm" style="left:35.00px;top:829.48px;font-size:15.5px;font-weight:700;color:#111;transform:translateX(-50%) scaleX(0.8800);letter-spacing:0px">?</div>
<div class="abs" style="left:15px;top:886px;width:40px;height:40px;border-radius:50%;background:#e0e0e0"></div>
<div class="t" id="la" style="left:35.05px;top:899.80px;font-size:11.7px;font-weight:700;color:#3d3d3d;transform:translateX(-50%) scaleX(0.9683);letter-spacing:0px">LA</div>

<!--SECTIONS-->
</div>
</body>
</html>
